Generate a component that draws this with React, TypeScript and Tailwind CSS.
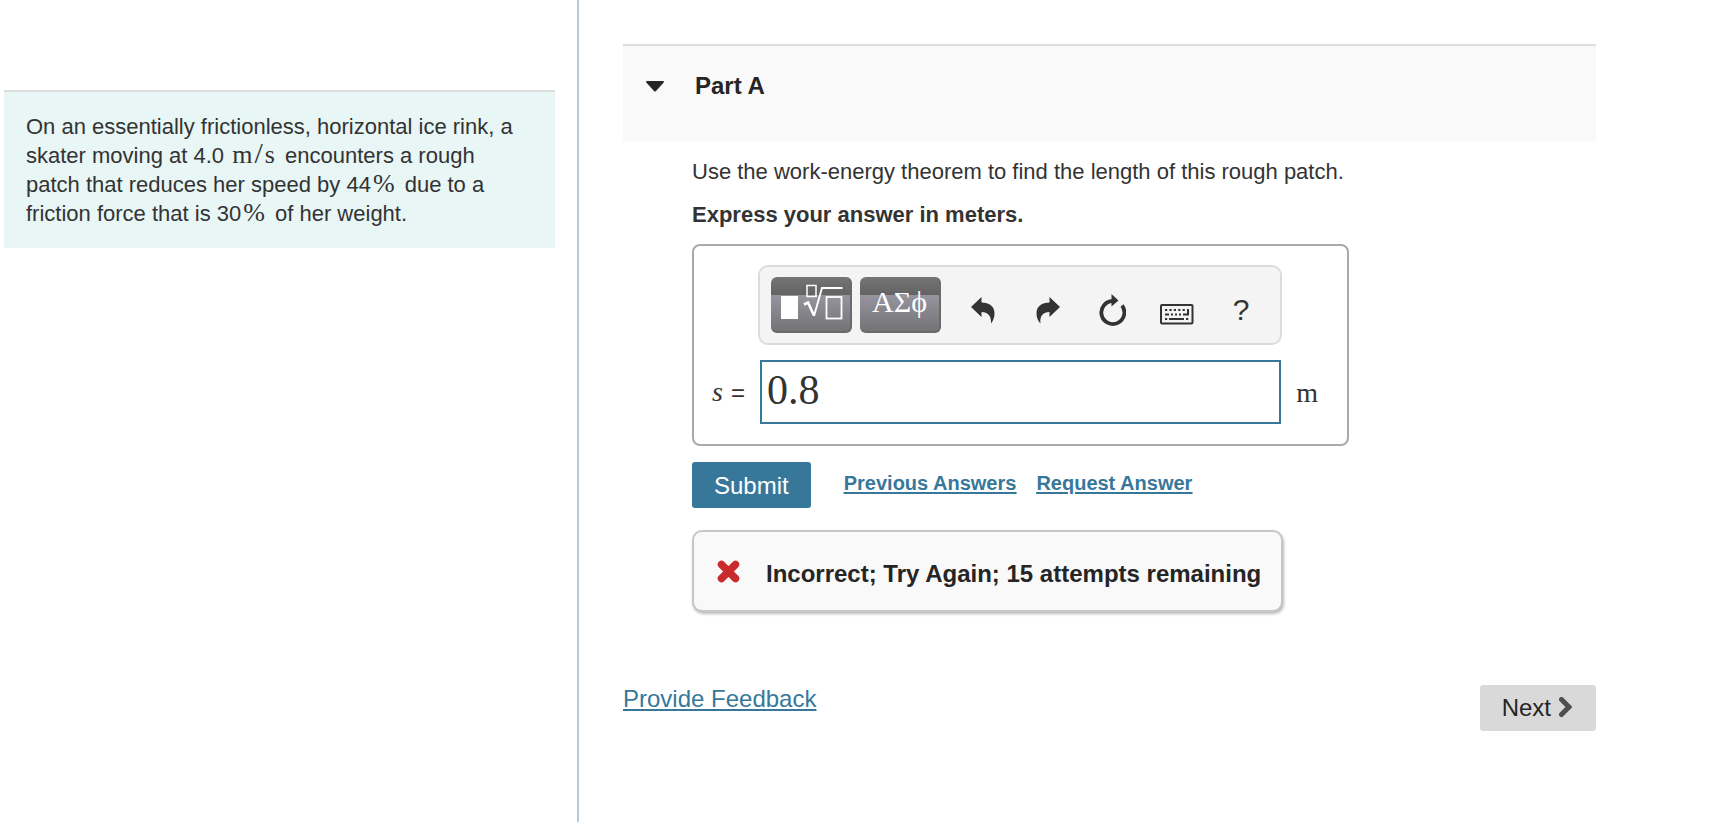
import { useState } from 'react';
import type { ReactNode } from 'react';

const MathText = ({ children }: { children: ReactNode }) => (
  <span className="mr-1 ml-0.5 font-['Liberation_Serif',serif] text-[26px] leading-0">
    {children}
  </span>
);

const ProblemPane = () => {
  return (
    <aside className="w-1/3 min-w-[579px] shrink-0 border-r-2 border-[#b9c8e2] pt-[90px] pr-[22px] pl-1">
      <p className="border-t-2 border-[#dedede] bg-[#e8f6f6] py-5 pr-[34px] pl-[22px] text-[22px] leading-[29px] text-[#333]">
        On an essentially frictionless, horizontal ice rink, a skater moving at
        4.0{' '}
        <MathText>
          m<span className="mx-0.5 text-[30px]">/</span>s
        </MathText>{' '}
        encounters a rough patch that reduces her speed by 44
        <MathText>%</MathText> due to a friction force that is 30
        <MathText>%</MathText> of her weight.
      </p>
    </aside>
  );
};

const PaletteButton = ({
  label,
  children,
}: {
  label: string;
  children: ReactNode;
}) => (
  <button
    type="button"
    aria-label={label}
    className="flex h-14 w-[81px] items-center justify-center rounded-md border-r-2 border-b-2 border-[#6a6a6a] bg-[linear-gradient(to_bottom,#757575_0,#636363_18px,#96959e_18px,#747377_100%)] text-white"
  >
    {children}
  </button>
);

const ToolButton = ({
  label,
  children,
}: {
  label: string;
  children: ReactNode;
}) => (
  <button
    type="button"
    aria-label={label}
    className="flex h-9 w-9 items-center justify-center text-[#333]"
  >
    {children}
  </button>
);

const TemplatesIcon = () => (
  <svg width="64" height="46" viewBox="0 0 64 46" fill="none" stroke="#fff">
    <rect x="2" y="15" width="17" height="23" fill="#fff" stroke="none" />
    <rect x="28" y="4.500" width="9" height="11" strokeWidth="1.500" />
    <path d="M25 23.500l4-2 6 13" strokeWidth="2.600" />
    <path d="M35 35l8-28h20.500" strokeWidth="1.900" />
    <rect x="47.500" y="16" width="15" height="21.500" strokeWidth="1.800" />
  </svg>
);

const UndoIcon = () => (
  <svg width="24" height="27" viewBox="0 0 24 27" fill="currentColor">
    <path d="M0 10L10.500 0v5.500C18 5.500 23.500 9 23.500 16.500c0 4-1.500 7.500-3.500 10C20.500 19 17 15 10.500 15v5z" />
  </svg>
);

const RedoIcon = () => (
  <svg width="24" height="27" viewBox="0 0 24 27" fill="currentColor">
    <path d="M24 10L13.500 0v5.500C6 5.500 .5 9 .5 16.500c0 4 1.500 7.500 4 10C3.500 19 7 15 13.500 15v5z" />
  </svg>
);

const ResetIcon = () => (
  <svg width="28" height="32" viewBox="0 0 28 32" fill="none">
    <path
      d="M14.500 7A11.500 11.500 0 1 0 24 11.500"
      stroke="currentColor"
      strokeWidth="3.800"
    />
    <path d="M13.500 0l7 6.500-7 6z" fill="currentColor" />
  </svg>
);

const KeyboardIcon = () => (
  <svg width="34" height="21" viewBox="0 0 34 21" fill="none" stroke="currentColor">
    <rect x="1" y="1" width="31.500" height="18.500" rx="1" strokeWidth="2" />
    <path d="M5 6h20" strokeWidth="2" strokeDasharray="2.200 2.200" />
    <path d="M5 10.500h4M11 10.500h2M15 10.500h2M19 10.500h2M23 10.500h5V5" strokeWidth="2" />
    <path d="M5 15h2.200M9 15h15M26 15h2.200" strokeWidth="2" />
  </svg>
);

const AnswerBox = () => {
  const [answer, setAnswer] = useState('0.8');
  return (
    <div className="mt-[15px] max-w-[657px] rounded-lg border-2 border-[#a9a9a9] pt-[19px] pr-[29px] pb-5 pl-[18px]">
      <div className="mr-9 ml-[46px] flex items-center rounded-[10px] border-2 border-[#dcdcdc] bg-[#f4f4f4] px-[11px] py-[10px]">
        <div className="flex gap-2">
          <PaletteButton label="Templates">
            <TemplatesIcon />
          </PaletteButton>
          <PaletteButton label="Greek symbols">
            <span className="pb-1 font-['Liberation_Serif',serif] text-[30px] leading-9">
              ΑΣϕ
            </span>
          </PaletteButton>
        </div>
        <div className="flex flex-1 justify-between pt-[10px] pr-[10px] pl-6">
          <ToolButton label="Undo">
            <UndoIcon />
          </ToolButton>
          <ToolButton label="Redo">
            <RedoIcon />
          </ToolButton>
          <ToolButton label="Reset">
            <ResetIcon />
          </ToolButton>
          <ToolButton label="Keyboard shortcuts">
            <span className="pt-2">
              <KeyboardIcon />
            </span>
          </ToolButton>
          <ToolButton label="Help">
            <span className="text-[30px] leading-8">?</span>
          </ToolButton>
        </div>
      </div>
      <div className="mt-[15px] flex items-center text-[#333]">
        <label
          htmlFor="answer"
          className="flex w-[48px] shrink-0 items-baseline gap-2 text-[24px]"
        >
          <i className="font-['Liberation_Serif',serif] text-[28px]">s</i>
          <span>=</span>
        </label>
        <input
          id="answer"
          value={answer}
          onChange={(e) => setAnswer(e.target.value)}
          className="h-16 min-w-0 flex-1 border-2 border-[#37789a] bg-white px-[5px] pb-1 font-['Liberation_Serif',serif] text-[42px] leading-none outline-none"
        />
        <span className="ml-[15px] font-['Liberation_Serif',serif] text-[28px]">
          m
        </span>
      </div>
    </div>
  );
};

const PartPane = () => {
  return (
    <main className="min-w-0 flex-1 pt-11 pr-[126px] pl-11">
      <header className="border-t-2 border-[#dedede] bg-[#f9f9f9] pt-6 pb-[39px] pl-[23px]">
        <button
          type="button"
          aria-expanded="true"
          className="flex items-center gap-[31px] text-[24px] leading-8 font-bold text-[#252525]"
        >
          <svg width="18" height="11" viewBox="0 0 18 11" fill="currentColor">
            <path d="M1 0h16q1.500.5.500 1.700L10 10q-1 1-2 0L.5 1.700Q-.5.5 1 0z" />
          </svg>
          Part A
        </button>
      </header>
      <section className="pl-[69px] text-[22px] leading-[29px] text-[#333]">
        <p className="mt-4">
          Use the work-energy theorem to find the length of this rough patch.
        </p>
        <p className="mt-[14px] font-bold">Express your answer in meters.</p>
        <AnswerBox />
        <div className="mt-4 flex items-center">
          <button
            type="submit"
            className="h-[46px] rounded-[3px] bg-[#37789a] px-[22px] text-[24px] text-white"
          >
            Submit
          </button>
          <div className="ml-[33px] flex gap-5 pb-1 text-[20px] font-bold text-[#37789a] underline decoration-2 underline-offset-2">
            <a href="#previous">Previous Answers</a>
            <a href="#request">Request Answer</a>
          </div>
        </div>
        <div
          role="status"
          className="mt-[22px] inline-flex h-[82px] items-center rounded-[10px] border-2 border-[#c6c6c6] bg-[#f9f9f9] pr-5 pl-[23px] text-[24px] font-bold text-[#252525] shadow-[1px_2px_3px_#bbb]"
        >
          <svg className="mr-[26px]" width="23" height="23" viewBox="0 0 23 23">
            <path
              d="M4.500 4.500l14 14M18.500 4.500l-14 14"
              stroke="#cb2a2c"
              strokeWidth="7.500"
              strokeLinecap="round"
            />
          </svg>
          <span className="pt-1">
            Incorrect; Try Again; 15 attempts remaining
          </span>
        </div>
      </section>
      <footer className="mt-[73px] flex items-start justify-between text-[24px]">
        <a
          href="#feedback"
          className="leading-7 text-[#37789a] underline decoration-2 underline-offset-2"
        >
          Provide Feedback
        </a>
        <button
          type="button"
          className="flex h-[46px] items-center gap-2 rounded-[3px] bg-[#d9d9d9] pr-6 pl-[22px] text-[#252525]"
        >
          Next
          <svg width="13" height="22" viewBox="0 0 13 22" fill="none">
            <path
              d="M2.500 2.500L10 10l-7.500 7.500"
              stroke="#4f4f4f"
              strokeWidth="5"
              strokeLinecap="round"
            />
          </svg>
        </button>
      </footer>
    </main>
  );
};

const App = () => {
  return (
    <div className="flex min-h-screen bg-white pb-2 font-['Liberation_Sans',Arial,sans-serif]">
      <ProblemPane />
      <PartPane />
    </div>
  );
};

export default App;
